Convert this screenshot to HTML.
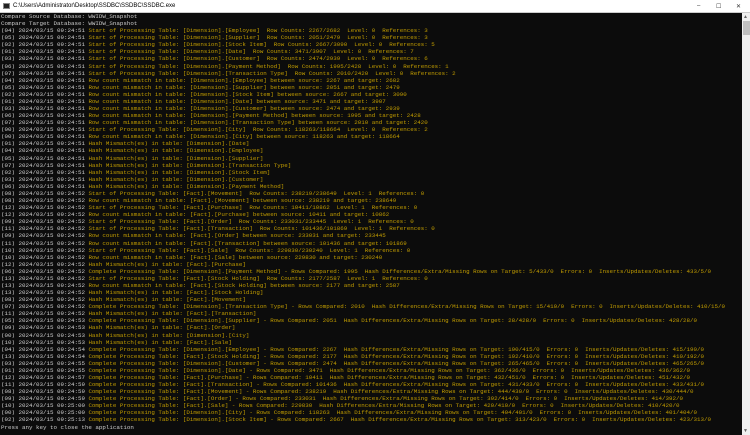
<!DOCTYPE html>
<html><head><meta charset="utf-8"><style>
*{margin:0;padding:0;box-sizing:border-box}
html,body{width:750px;height:435px;overflow:hidden;background:#0c0c0c}
#title{position:absolute;left:0;top:0;width:750px;height:13px;background:#fff;border-bottom:1px solid #ccc}
#title .t{position:absolute;left:13px;top:3px;font:6px "Liberation Sans",sans-serif;color:#000}
#title .ic{position:absolute;left:3px;top:3px;width:7px;height:6px;background:#222;border:1px solid #888}
#title .b{position:absolute;top:3px;font:6px "Liberation Sans",sans-serif;color:#333}
#con{position:absolute;left:1px;top:13px;width:740px;font-family:"Liberation Mono",monospace;font-size:5.84px;line-height:7.08px;white-space:pre;color:#cccccc}
#con span{color:#c19c00}
#sb{position:absolute;left:742px;top:13px;width:8px;height:422px;background:#f0f0f0}
#sb .th{position:absolute;left:1px;top:8px;width:7px;height:14px;background:#c0c0c0}
#sb .u{position:absolute;left:1px;top:1px;font:5px "Liberation Sans",sans-serif;color:#666}
#sb .d{position:absolute;left:1px;bottom:1px;font:5px "Liberation Sans",sans-serif;color:#666}
</style></head><body>
<div id="title"><div class="ic"></div><div class="t">C:\Users\Administrator\Desktop\SSDBC\SSDBC\SSDBC.exe</div>
<div class="b" style="left:697px">&#8211;</div><div class="b" style="left:716px">&#9744;</div><div class="b" style="left:736px">&#10005;</div></div>
<div id="con">Compare Source Database: WWIDW_Snapshot
Compare Target Database: WWIDW_Snapshot
(04) 2024/03/15 09:24:51 <span>Start of Processing Table: [Dimension].[Employee]  Row Counts: 2267/2682  Level: 0  References: 3</span>
(05) 2024/03/15 09:24:51 <span>Start of Processing Table: [Dimension].[Supplier]  Row Counts: 2051/2479  Level: 0  References: 3</span>
(02) 2024/03/15 09:24:51 <span>Start of Processing Table: [Dimension].[Stock Item]  Row Counts: 2667/3090  Level: 0  References: 5</span>
(01) 2024/03/15 09:24:51 <span>Start of Processing Table: [Dimension].[Date]  Row Counts: 3471/3907  Level: 0  References: 7</span>
(03) 2024/03/15 09:24:51 <span>Start of Processing Table: [Dimension].[Customer]  Row Counts: 2474/2939  Level: 0  References: 6</span>
(06) 2024/03/15 09:24:51 <span>Start of Processing Table: [Dimension].[Payment Method]  Row Counts: 1995/2428  Level: 0  References: 1</span>
(07) 2024/03/15 09:24:51 <span>Start of Processing Table: [Dimension].[Transaction Type]  Row Counts: 2010/2420  Level: 0  References: 2</span>
(04) 2024/03/15 09:24:51 <span>Row count mismatch in table: [Dimension].[Employee] between source: 2267 and target: 2682</span>
(05) 2024/03/15 09:24:51 <span>Row count mismatch in table: [Dimension].[Supplier] between source: 2051 and target: 2479</span>
(02) 2024/03/15 09:24:51 <span>Row count mismatch in table: [Dimension].[Stock Item] between source: 2667 and target: 3090</span>
(01) 2024/03/15 09:24:51 <span>Row count mismatch in table: [Dimension].[Date] between source: 3471 and target: 3907</span>
(03) 2024/03/15 09:24:51 <span>Row count mismatch in table: [Dimension].[Customer] between source: 2474 and target: 2939</span>
(06) 2024/03/15 09:24:51 <span>Row count mismatch in table: [Dimension].[Payment Method] between source: 1995 and target: 2428</span>
(07) 2024/03/15 09:24:51 <span>Row count mismatch in table: [Dimension].[Transaction Type] between source: 2010 and target: 2420</span>
(00) 2024/03/15 09:24:51 <span>Start of Processing Table: [Dimension].[City]  Row Counts: 118263/118664  Level: 0  References: 2</span>
(00) 2024/03/15 09:24:51 <span>Row count mismatch in table: [Dimension].[City] between source: 118263 and target: 118664</span>
(01) 2024/03/15 09:24:51 <span>Hash Mismatch(es) in table: [Dimension].[Date]</span>
(04) 2024/03/15 09:24:51 <span>Hash Mismatch(es) in table: [Dimension].[Employee]</span>
(05) 2024/03/15 09:24:51 <span>Hash Mismatch(es) in table: [Dimension].[Supplier]</span>
(07) 2024/03/15 09:24:51 <span>Hash Mismatch(es) in table: [Dimension].[Transaction Type]</span>
(02) 2024/03/15 09:24:51 <span>Hash Mismatch(es) in table: [Dimension].[Stock Item]</span>
(03) 2024/03/15 09:24:51 <span>Hash Mismatch(es) in table: [Dimension].[Customer]</span>
(06) 2024/03/15 09:24:51 <span>Hash Mismatch(es) in table: [Dimension].[Payment Method]</span>
(08) 2024/03/15 09:24:52 <span>Start of Processing Table: [Fact].[Movement]  Row Counts: 238219/238649  Level: 1  References: 0</span>
(08) 2024/03/15 09:24:52 <span>Row count mismatch in table: [Fact].[Movement] between source: 238219 and target: 238649</span>
(12) 2024/03/15 09:24:52 <span>Start of Processing Table: [Fact].[Purchase]  Row Counts: 10411/10862  Level: 1  References: 0</span>
(12) 2024/03/15 09:24:52 <span>Row count mismatch in table: [Fact].[Purchase] between source: 10411 and target: 10862</span>
(09) 2024/03/15 09:24:52 <span>Start of Processing Table: [Fact].[Order]  Row Counts: 233031/233445  Level: 1  References: 0</span>
(11) 2024/03/15 09:24:52 <span>Start of Processing Table: [Fact].[Transaction]  Row Counts: 101436/101869  Level: 1  References: 0</span>
(09) 2024/03/15 09:24:52 <span>Row count mismatch in table: [Fact].[Order] between source: 233031 and target: 233445</span>
(11) 2024/03/15 09:24:52 <span>Row count mismatch in table: [Fact].[Transaction] between source: 101436 and target: 101869</span>
(10) 2024/03/15 09:24:52 <span>Start of Processing Table: [Fact].[Sale]  Row Counts: 229830/230240  Level: 1  References: 0</span>
(10) 2024/03/15 09:24:52 <span>Row count mismatch in table: [Fact].[Sale] between source: 229830 and target: 230240</span>
(12) 2024/03/15 09:24:52 <span>Hash Mismatch(es) in table: [Fact].[Purchase]</span>
(06) 2024/03/15 09:24:52 <span>Complete Processing Table: [Dimension].[Payment Method] - Rows Compared: 1995  Hash Differences/Extra/Missing Rows on Target: 5/433/0  Errors: 0  Inserts/Updates/Deletes: 433/5/0</span>
(13) 2024/03/15 09:24:52 <span>Start of Processing Table: [Fact].[Stock Holding]  Row Counts: 2177/2587  Level: 1  References: 0</span>
(13) 2024/03/15 09:24:52 <span>Row count mismatch in table: [Fact].[Stock Holding] between source: 2177 and target: 2587</span>
(13) 2024/03/15 09:24:52 <span>Hash Mismatch(es) in table: [Fact].[Stock Holding]</span>
(08) 2024/03/15 09:24:52 <span>Hash Mismatch(es) in table: [Fact].[Movement]</span>
(07) 2024/03/15 09:24:52 <span>Complete Processing Table: [Dimension].[Transaction Type] - Rows Compared: 2010  Hash Differences/Extra/Missing Rows on Target: 15/410/0  Errors: 0  Inserts/Updates/Deletes: 410/15/0</span>
(11) 2024/03/15 09:24:52 <span>Hash Mismatch(es) in table: [Fact].[Transaction]</span>
(05) 2024/03/15 09:24:53 <span>Complete Processing Table: [Dimension].[Supplier] - Rows Compared: 2051  Hash Differences/Extra/Missing Rows on Target: 28/428/0  Errors: 0  Inserts/Updates/Deletes: 428/28/0</span>
(09) 2024/03/15 09:24:53 <span>Hash Mismatch(es) in table: [Fact].[Order]</span>
(00) 2024/03/15 09:24:53 <span>Hash Mismatch(es) in table: [Dimension].[City]</span>
(10) 2024/03/15 09:24:53 <span>Hash Mismatch(es) in table: [Fact].[Sale]</span>
(04) 2024/03/15 09:24:54 <span>Complete Processing Table: [Dimension].[Employee] - Rows Compared: 2267  Hash Differences/Extra/Missing Rows on Target: 190/415/0  Errors: 0  Inserts/Updates/Deletes: 415/190/0</span>
(13) 2024/03/15 09:24:54 <span>Complete Processing Table: [Fact].[Stock Holding] - Rows Compared: 2177  Hash Differences/Extra/Missing Rows on Target: 192/410/0  Errors: 0  Inserts/Updates/Deletes: 410/192/0</span>
(03) 2024/03/15 09:24:55 <span>Complete Processing Table: [Dimension].[Customer] - Rows Compared: 2474  Hash Differences/Extra/Missing Rows on Target: 265/465/0  Errors: 0  Inserts/Updates/Deletes: 465/265/0</span>
(01) 2024/03/15 09:24:55 <span>Complete Processing Table: [Dimension].[Date] - Rows Compared: 3471  Hash Differences/Extra/Missing Rows on Target: 362/436/0  Errors: 0  Inserts/Updates/Deletes: 436/362/0</span>
(12) 2024/03/15 09:24:57 <span>Complete Processing Table: [Fact].[Purchase] - Rows Compared: 10411  Hash Differences/Extra/Missing Rows on Target: 432/451/0  Errors: 0  Inserts/Updates/Deletes: 451/432/0</span>
(11) 2024/03/15 09:24:59 <span>Complete Processing Table: [Fact].[Transaction] - Rows Compared: 101436  Hash Differences/Extra/Missing Rows on Target: 431/433/0  Errors: 0  Inserts/Updates/Deletes: 433/431/0</span>
(08) 2024/03/15 09:24:59 <span>Complete Processing Table: [Fact].[Movement] - Rows Compared: 238219  Hash Differences/Extra/Missing Rows on Target: 444/430/0  Errors: 0  Inserts/Updates/Deletes: 430/444/0</span>
(09) 2024/03/15 09:24:59 <span>Complete Processing Table: [Fact].[Order] - Rows Compared: 233031  Hash Differences/Extra/Missing Rows on Target: 392/414/0  Errors: 0  Inserts/Updates/Deletes: 414/392/0</span>
(10) 2024/03/15 09:25:00 <span>Complete Processing Table: [Fact].[Sale] - Rows Compared: 229830  Hash Differences/Extra/Missing Rows on Target: 420/410/0  Errors: 0  Inserts/Updates/Deletes: 410/420/0</span>
(00) 2024/03/15 09:25:00 <span>Complete Processing Table: [Dimension].[City] - Rows Compared: 118263  Hash Differences/Extra/Missing Rows on Target: 404/401/0  Errors: 0  Inserts/Updates/Deletes: 401/404/0</span>
(02) 2024/03/15 09:25:13 <span>Complete Processing Table: [Dimension].[Stock Item] - Rows Compared: 2667  Hash Differences/Extra/Missing Rows on Target: 313/423/0  Errors: 0  Inserts/Updates/Deletes: 423/313/0</span>
Press any key to close the application</div>
<div id="sb"><div class="u">&#9650;</div><div class="th"></div><div class="d">&#9660;</div></div>
</body></html>
